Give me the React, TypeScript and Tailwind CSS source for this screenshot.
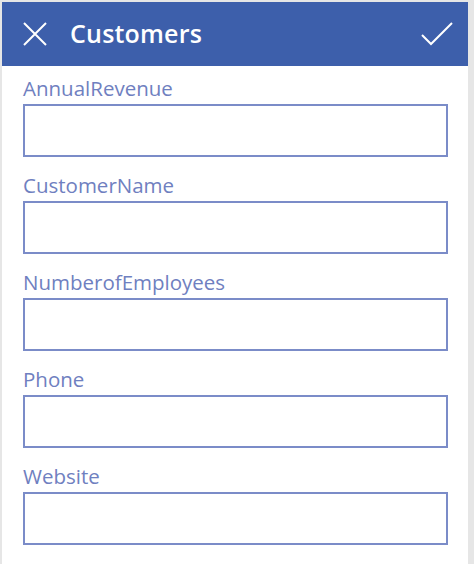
const fields = ["AnnualRevenue", "CustomerName", "NumberofEmployees", "Phone", "Website"];

export default function App() {
  return (
    <div
      className="h-[564px] w-[474px] bg-[#e6e6e6] pl-[2px] pr-[6px] pt-[2px]"
      style={{ fontFamily: '"Open Sans", "Noto Sans", sans-serif' }}
    >
      <div className="flex h-full flex-col bg-white">
        {/* Header bar */}
        <div className="flex h-[64px] items-center bg-[#3d5fab] pl-[20px] pr-[14px] text-white">
          <svg width="26" height="26" viewBox="0 0 26 26" fill="none" stroke="white" strokeWidth="2">
            <path d="M2 2 L24 24 M24 2 L2 24" />
          </svg>
          <span className="ml-[22px] text-[25px] font-semibold tracking-[0.2px]">Customers</span>
          <svg className="ml-auto" width="34" height="26" viewBox="0 0 34 26" fill="none" stroke="white" strokeWidth="2">
            <path d="M2 14 L11 23 L32 2" />
          </svg>
        </div>

        {/* Edit form */}
        <div className="flex flex-col pl-[21px] pr-[20px] pt-[6px]">
          {fields.map((name) => (
            <div key={name} className="flex h-[97px] flex-col">
              <label className="h-[32px] text-[20.5px] leading-[32px] text-[#6f80c0]">{name}</label>
              <div className="h-[53px] w-full border-2 border-[#7b8cc8] bg-white" />
            </div>
          ))}
        </div>
      </div>
    </div>
  );
}
